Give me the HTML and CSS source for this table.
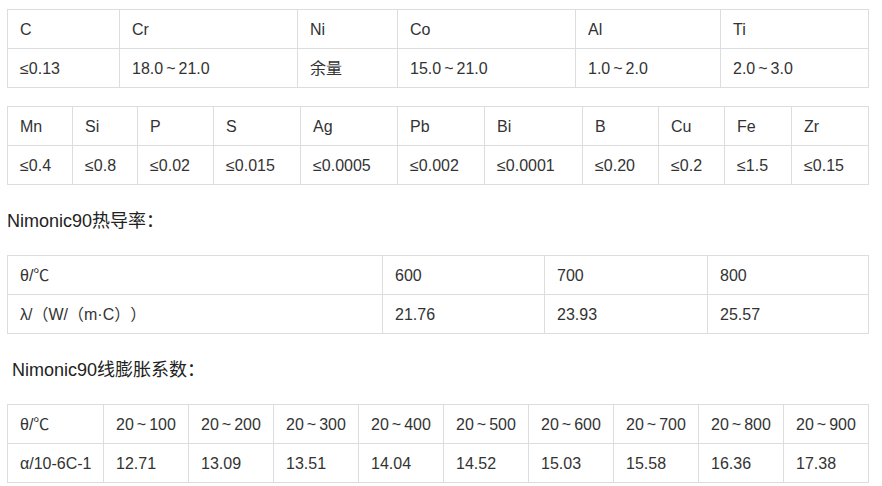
FILE: index.html
```html
<!DOCTYPE html>
<html lang="zh">
<head>
<meta charset="utf-8">
<title>Nimonic90</title>
<link rel="stylesheet" href="styles.css">
</head>
<body>
<div class="page">
  <table class="grid t1">
    <colgroup><col><col><col><col><col><col></colgroup>
    <tr><td>C</td><td>Cr</td><td>Ni</td><td>Co</td><td>Al</td><td>Ti</td></tr>
    <tr><td>≤0.13</td><td>18.0<span class="tl">~</span>21.0</td><td>余量</td><td>15.0<span class="tl">~</span>21.0</td><td>1.0<span class="tl">~</span>2.0</td><td>2.0<span class="tl">~</span>3.0</td></tr>
  </table>

  <table class="grid t2">
    <colgroup><col><col><col><col><col><col><col><col><col><col><col></colgroup>
    <tr><td>Mn</td><td>Si</td><td>P</td><td>S</td><td>Ag</td><td>Pb</td><td>Bi</td><td>B</td><td>Cu</td><td>Fe</td><td>Zr</td></tr>
    <tr><td>≤0.4</td><td>≤0.8</td><td>≤0.02</td><td>≤0.015</td><td>≤0.0005</td><td>≤0.002</td><td>≤0.0001</td><td>≤0.20</td><td>≤0.2</td><td>≤1.5</td><td>≤0.15</td></tr>
  </table>

  <p class="caption">Nimonic90热导率：</p>

  <table class="grid t3">
    <colgroup><col><col><col><col></colgroup>
    <tr><td>θ/℃</td><td>600</td><td>700</td><td>800</td></tr>
    <tr><td>λ/（W/（m·C））</td><td>21.76</td><td>23.93</td><td>25.57</td></tr>
  </table>

  <p class="caption indent">Nimonic90线膨胀系数：</p>

  <table class="grid t4">
    <colgroup><col><col><col><col><col><col><col><col><col><col></colgroup>
    <tr><td>θ/℃</td><td>20<span class="tl">~</span>100</td><td>20<span class="tl">~</span>200</td><td>20<span class="tl">~</span>300</td><td>20<span class="tl">~</span>400</td><td>20<span class="tl">~</span>500</td><td>20<span class="tl">~</span>600</td><td>20<span class="tl">~</span>700</td><td>20<span class="tl">~</span>800</td><td>20<span class="tl">~</span>900</td></tr>
    <tr><td>α/10-6C-1</td><td>12.71</td><td>13.09</td><td>13.51</td><td>14.04</td><td>14.52</td><td>15.03</td><td>15.58</td><td>16.36</td><td>17.38</td></tr>
  </table>
</div>
</body>
</html>
```

FILE: styles.css
```css
html, body {
  margin: 0;
  padding: 0;
  background: #ffffff;
}

body {
  font-family: "Liberation Sans", Arial, "Noto Sans CJK SC", sans-serif;
  color: #333333;
  font-size: 16px;
  text-spacing-trim: space-all;
}

.page {
  padding: 9px 0 0 7px;
}

.grid {
  border-collapse: collapse;
  table-layout: fixed;
  width: 862px;
}

.grid td {
  border: 1px solid #dddddd;
  padding: 11px 12px 9px;
  line-height: 18px;
  white-space: nowrap;
  overflow: hidden;
}

.tl {
  font-family: "Liberation Sans", Arial, sans-serif;
  margin: 0 3px;
}

.t1 { margin-bottom: 18px; }
.t2 { margin-bottom: 23px; }
.t3 { margin-bottom: 23px; }

.t1 col:nth-child(1) { width: 112px; }
.t1 col:nth-child(2) { width: 178px; }
.t1 col:nth-child(3) { width: 100px; }
.t1 col:nth-child(4) { width: 178px; }
.t1 col:nth-child(5) { width: 145px; }
.t1 col:nth-child(6) { width: 148px; }

.t2 col:nth-child(1) { width: 65px; }
.t2 col:nth-child(2) { width: 65px; }
.t2 col:nth-child(3) { width: 76px; }
.t2 col:nth-child(4) { width: 87px; }
.t2 col:nth-child(5) { width: 97px; }
.t2 col:nth-child(6) { width: 87px; }
.t2 col:nth-child(7) { width: 98px; }
.t2 col:nth-child(8) { width: 76px; }
.t2 col:nth-child(9) { width: 66px; }
.t2 col:nth-child(10) { width: 67px; }
.t2 col:nth-child(11) { width: 77px; }

.t3 col:nth-child(1) { width: 375px; }
.t3 col:nth-child(2) { width: 162px; }
.t3 col:nth-child(3) { width: 163px; }
.t3 col:nth-child(4) { width: 161px; }

.t4 col { width: 85px; }
.t4 col:nth-child(1) { width: 96px; }

.caption {
  margin: 0 0 20px;
  font-size: 18px;
  line-height: 27px;
  color: #222222;
}

.indent {
  padding-left: 5px;
}
```
